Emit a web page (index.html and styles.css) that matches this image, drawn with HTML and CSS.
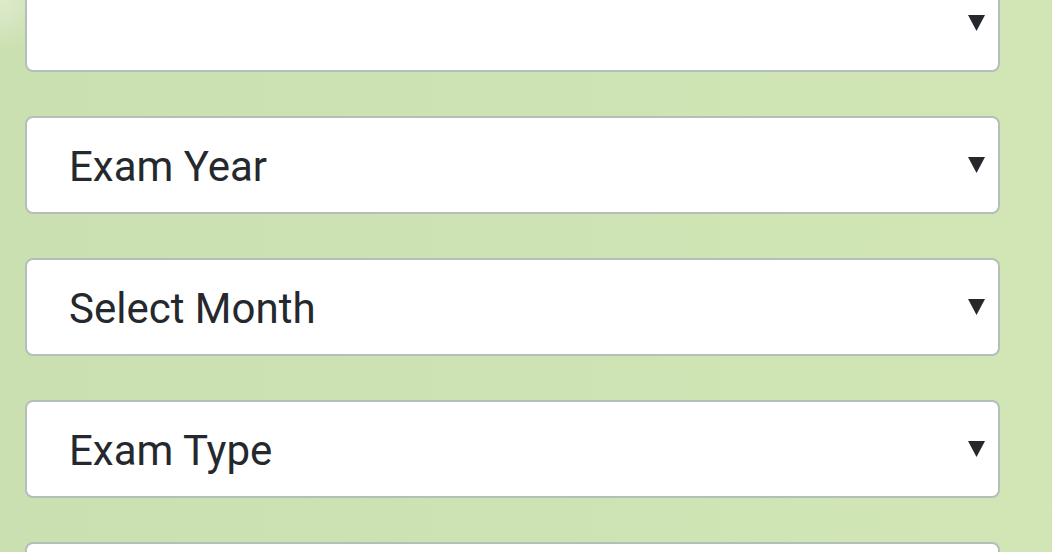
FILE: index.html
```html
<!DOCTYPE html>
<html>
<head>
<meta charset="utf-8">
<link rel="stylesheet" href="styles.css">
</head>
<body>
<div class="page">
  <div class="form">
    <div class="select"><span class="label"></span><svg class="caret" viewBox="0 0 17 16"><polygon points="0,0 17,0 8.5,16"/></svg></div>
    <div class="select"><span class="label">Exam Year</span><svg class="caret" viewBox="0 0 17 16"><polygon points="0,0 17,0 8.5,16"/></svg></div>
    <div class="select"><span class="label">Select Month</span><svg class="caret" viewBox="0 0 17 16"><polygon points="0,0 17,0 8.5,16"/></svg></div>
    <div class="select"><span class="label">Exam Type</span><svg class="caret" viewBox="0 0 17 16"><polygon points="0,0 17,0 8.5,16"/></svg></div>
    <div class="select"><span class="label"></span><svg class="caret" viewBox="0 0 17 16"><polygon points="0,0 17,0 8.5,16"/></svg></div>
  </div>
</div>
</body>
</html>
```
FILE: styles.css
```css
html, body {
  margin: 0;
  padding: 0;
  height: 100%;
  overflow: hidden;
}
body {
  background: linear-gradient(90deg, #cbe0b1 0%, #cee3b3 50%, #d2e6b5 100%);
  font-family: Roboto, "Noto Sans", sans-serif;
}
.page {
  width: 1052px;
  height: 552px;
  overflow: hidden;
  background: radial-gradient(circle at 0 0, rgba(230,240,218,0.7) 0, rgba(230,240,218,0) 50px);
}
.form {
  display: flex;
  flex-direction: column;
  gap: 44px;
  margin-top: -26px;
  padding-left: 25px;
  width: 975px;
}
.select {
  box-sizing: border-box;
  height: 98px;
  background: #fff;
  border: 2px solid #b5bfba;
  border-radius: 8px;
  display: flex;
  align-items: center;
  justify-content: space-between;
  padding: 0 13px 0 42px;
  flex-shrink: 0;
}
.label {
  font-size: 42px;
  color: #25282c;
  line-height: 1;
  padding-top: 3px;
}
.caret {
  width: 17px;
  height: 16px;
  fill: #25282c;
}
```
